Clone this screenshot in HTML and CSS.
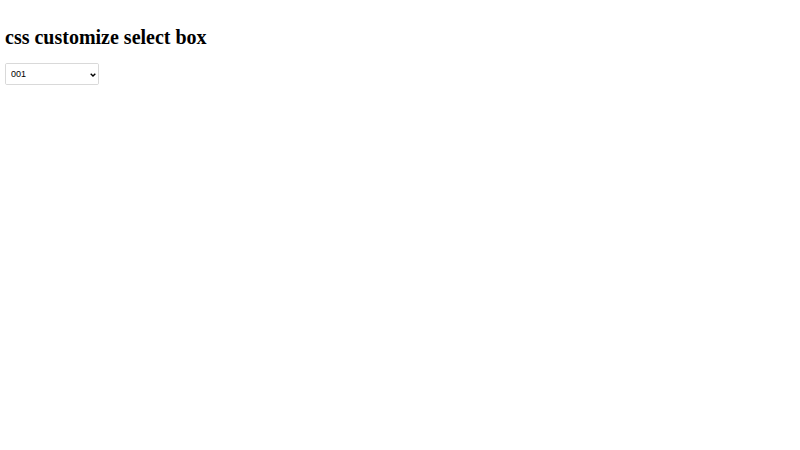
FILE: index.html
```html
<!DOCTYPE html>
<html lang="en">
<head>
    <meta charset="UTF-8">
    <meta name="viewport" content="width=device-width, initial-scale=1.0">
    <title>css customize select box</title>
    <link rel="stylesheet" href="styles.css">
</head>
<body>
    <h1>css customize select box</h1>

    <div class="select-box">
        <select class="select-box-input" aria-label="Number">
            <option value="001">001</option>
            <option value="002">002</option>
            <option value="003">003</option>
        </select>
        <svg class="select-box-arrow" viewBox="0 0 6 4" aria-hidden="true">
            <path d="M0.7 0.7 L3 3 L5.3 0.7" fill="none" stroke="#000" stroke-width="1.4"/>
        </svg>
    </div>
</body>
</html>
```
FILE: styles.css
```css
body {
    margin: 0;
    padding: 5px;
    font-family: "Liberation Serif", "Times New Roman", serif;
}

h1 {
    margin: 20px 0 14px;
    font-size: 20px;
    line-height: 24px;
}

.select-box {
    position: relative;
    width: 94px;
    border: 1px solid #d9d9d9;
    border-radius: 2px;
    box-sizing: border-box;
    overflow: hidden;
}

.select-box-input {
    display: block;
    width: 100%;
    height: 20px;
    padding: 0 5px;
    border: none;
    background: #fff;
    color: #000;
    font-family: "Liberation Sans", Arial, sans-serif;
    font-size: 9px;
    appearance: none;
}

/* arrow sits over the select, clicks go through to it */
.select-box-arrow {
    position: absolute;
    top: 9px;
    right: 2px;
    width: 6px;
    height: 4px;
    pointer-events: none;
}
```
